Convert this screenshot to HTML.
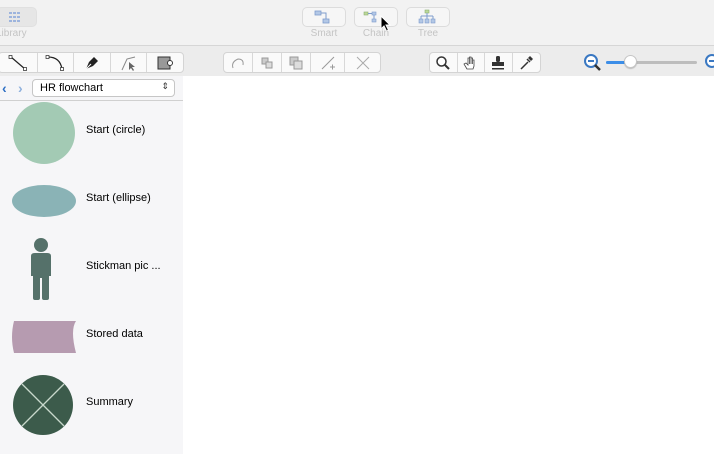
<!DOCTYPE html>
<html><head><style>
body{margin:0;width:714px;height:454px;overflow:hidden;background:#fff;font-family:"Liberation Sans",sans-serif;position:relative}
.a{position:absolute}
.btn{position:absolute;border:1px solid #dcdcdc;border-radius:5px;background:#f6f6f6;box-sizing:border-box}
.lbl{position:absolute;font-size:10px;color:#c4c4c4;text-align:center}
.grp{position:absolute;top:52px;height:21px;border:1px solid #d4d4d4;border-radius:4px;background:#fafafa;box-sizing:border-box;display:flex}
.grp div{border-right:1px solid #d8d8d8;height:100%;box-sizing:border-box;display:flex;align-items:center;justify-content:center}
.grp div:last-child{border-right:none}
.t{position:absolute;font-size:11px;color:#000}
</style></head><body>
<div class="a" style="left:0;top:0;width:714px;height:45px;background:#f2f2f2;border-bottom:1px solid #d6d6d6"></div>
<div class="a" style="left:0;top:46px;width:714px;height:30px;background:#ececec"></div>
<div class="btn" style="left:-4px;top:7px;width:41px;height:20px;background:#e6e6e6;border-color:#e0e0e0"></div>
<svg class="a" style="left:8px;top:10px" width="14" height="14"><g fill="#9db4dd"><rect x="1" y="2" width="3" height="2"/><rect x="5" y="2" width="3" height="2"/><rect x="9" y="2" width="3" height="2"/><rect x="1" y="6" width="3" height="2"/><rect x="5" y="6" width="3" height="2"/><rect x="9" y="6" width="3" height="2"/><rect x="1" y="10" width="3" height="2"/><rect x="5" y="10" width="3" height="2"/><rect x="9" y="10" width="3" height="2"/></g></svg>
<div class="lbl" style="left:-4px;top:28px">Library</div>
<div class="btn" style="left:302px;top:7px;width:44px;height:20px"></div>
<svg class="a" style="left:314px;top:9px" width="20" height="16"><rect x="1" y="2" width="6" height="4" fill="#b3c8e6" stroke="#7d9ccc" stroke-width=".8"/><path d="M7 4h5v6" stroke="#7d9ccc" fill="none"/><rect x="9" y="10" width="6" height="4" fill="#b3c8e6" stroke="#7d9ccc" stroke-width=".8"/></svg>
<div class="lbl" style="left:302px;top:28px;width:44px">Smart</div>
<div class="btn" style="left:354px;top:7px;width:44px;height:20px"></div>
<svg class="a" style="left:363px;top:9px" width="20" height="16"><rect x="1" y="3" width="4" height="3" fill="#bcd89a" stroke="#8cb070" stroke-width=".6"/><path d="M5 4.5h4M11 6v5" stroke="#7d9ccc"/><rect x="9" y="3" width="4" height="3" fill="#b3c8e6" stroke="#7d9ccc" stroke-width=".6"/><rect x="9" y="10" width="4" height="3" fill="#b3c8e6" stroke="#7d9ccc" stroke-width=".6"/></svg>
<svg class="a" style="left:380px;top:15px" width="12" height="18"><path d="M1 1v13l3-3 2.5 5 2-1-2.5-5h4z" fill="#000" stroke="#fff" stroke-width="1"/></svg>
<div class="lbl" style="left:354px;top:28px;width:44px">Chain</div>
<div class="btn" style="left:406px;top:7px;width:44px;height:20px"></div>
<svg class="a" style="left:418px;top:9px" width="20" height="16"><rect x="7" y="1" width="4" height="3" fill="#bcd89a" stroke="#8cb070" stroke-width=".6"/><path d="M9 4v3M3 7h12M3 7v3M9 7v3M15 7v3" stroke="#7d9ccc" fill="none"/><rect x="1" y="10" width="4" height="4" fill="#b3c8e6" stroke="#7d9ccc" stroke-width=".6"/><rect x="7" y="10" width="4" height="4" fill="#b3c8e6" stroke="#7d9ccc" stroke-width=".6"/><rect x="13" y="10" width="4" height="4" fill="#b3c8e6" stroke="#7d9ccc" stroke-width=".6"/></svg>
<div class="lbl" style="left:406px;top:28px;width:44px">Tree</div>

<div class="grp" style="left:-2px;width:186px">
<div style="width:39px"><svg width="20" height="16"><path d="M3 2l14 12" stroke="#222" stroke-width="1.2"/><rect x="1" y="0.5" width="3" height="3" fill="#fff" stroke="#222" stroke-width=".7"/><rect x="15.5" y="12.5" width="3" height="3" fill="#fff" stroke="#222" stroke-width=".7"/></svg></div>
<div style="width:37px"><svg width="20" height="16"><path d="M3 2q12 0 14 12" stroke="#222" stroke-width="1.2" fill="none"/><rect x="1" y="0.5" width="3" height="3" fill="#fff" stroke="#222" stroke-width=".7"/><rect x="15.5" y="12.5" width="3" height="3" fill="#fff" stroke="#222" stroke-width=".7"/></svg></div>
<div style="width:37px"><svg width="16" height="16"><path d="M2 14l3-7 5-5 4 4-5 5z" fill="#222"/><path d="M2 14l5-5" stroke="#fff"/></svg></div>
<div style="width:37px"><svg width="18" height="16"><path d="M2 15l5-11 8-2" stroke="#888" fill="none"/><path d="M9 7v8l2-2 2 3 1-1-2-3h3z" fill="#666"/></svg></div>
<div style="width:36px"><svg width="18" height="16"><rect x="2" y="2" width="12" height="12" fill="#999" stroke="#333"/><circle cx="14" cy="8" r="2.5" fill="#fff" stroke="#333"/></svg></div>
</div>
<div class="grp" style="left:223px;width:158px">
<div style="width:29px"><svg width="16" height="16"><path d="M3 13q-2-6 5-9q6 0 5 6" stroke="#999" fill="none"/></svg></div>
<div style="width:29px"><svg width="16" height="16"><rect x="3" y="3" width="6" height="6" fill="#ccc" stroke="#999"/><rect x="7" y="7" width="6" height="6" fill="#ddd" stroke="#999"/></svg></div>
<div style="width:29px"><svg width="16" height="16"><rect x="2" y="2" width="8" height="8" fill="#ccc" stroke="#999"/><rect x="6" y="6" width="8" height="8" fill="#ddd" stroke="#999"/></svg></div>
<div style="width:34px"><svg width="16" height="16"><path d="M2 14L14 2M10 12h5M12.5 9.5v5" stroke="#999"/></svg></div>
<div style="width:35px"><svg width="16" height="16"><path d="M2 2l12 12M14 2L2 14" stroke="#aaa"/></svg></div>
</div>
<div class="grp" style="left:429px;width:112px">
<div style="width:28px"><svg width="16" height="16"><circle cx="6.5" cy="6.5" r="4.5" stroke="#333" stroke-width="1.5" fill="#fff"/><path d="M10 10l4 4" stroke="#333" stroke-width="2"/></svg></div>
<div style="width:28px"><svg width="16" height="16"><path d="M4 14l-3-5 2-1 2 2V3h1.5v6V2h1.5v7V3h1.5v6V5h1.5v6l-1 3z" stroke="#444" fill="#fff" stroke-width=".8"/></svg></div>
<div style="width:28px"><svg width="16" height="16"><rect x="6" y="1" width="4" height="6" rx="1.5" fill="#333"/><rect x="2" y="7" width="12" height="4" fill="#333"/><rect x="2" y="13" width="12" height="1.5" fill="#333"/></svg></div>
<div style="width:28px"><svg width="16" height="16"><path d="M3 14l7-7M9 4l3 3" stroke="#333" stroke-width="1.5"/><path d="M10 3l2-2 3 3-2 2z" fill="#333"/></svg></div>
</div>
<svg class="a" style="left:583px;top:53px" width="20" height="20"><circle cx="8" cy="8" r="6" fill="#fff" stroke="#3a78c2" stroke-width="2"/><path d="M5 8h6" stroke="#3a78c2" stroke-width="2"/><path d="M12 12l5 5" stroke="#333" stroke-width="2.5"/></svg>
<div class="a" style="left:606px;top:61px;width:91px;height:3px;background:#bdbdbd;border-radius:2px"></div>
<div class="a" style="left:606px;top:61px;width:25px;height:3px;background:#3c8ee8;border-radius:2px"></div>
<div class="a" style="left:624px;top:55px;width:13px;height:13px;border-radius:50%;background:#fff;border:1px solid #c6c6c6;box-shadow:0 1px 1px rgba(0,0,0,.2);box-sizing:border-box"></div>
<svg class="a" style="left:704px;top:53px" width="12" height="16"><circle cx="8" cy="8" r="6" fill="#fff" stroke="#3a78c2" stroke-width="2"/><path d="M5 8h6" stroke="#3a78c2" stroke-width="2"/></svg>

<div class="a" style="left:0;top:76px;width:183px;height:378px;background:#f6f6f8"></div>
<div class="a" style="left:0;top:100px;width:183px;height:1px;background:#d0d0d0"></div>
<div class="a" style="left:2px;top:80px;color:#2d6fc4;font-size:14px;font-weight:bold">&#8249;</div>
<div class="a" style="left:18px;top:80px;color:#8fb1dd;font-size:14px;font-weight:bold">&#8250;</div>
<div class="a" style="left:32px;top:79px;width:143px;height:18px;background:#fff;border:1px solid #c6c6c6;border-radius:4px;box-sizing:border-box;font-size:11px;padding:2px 0 0 7px">HR flowchart<span style="position:absolute;right:5px;top:1px;font-size:9px;color:#333">&#8661;</span></div>

<svg class="a" style="left:0;top:100px" width="183" height="354">
<circle cx="44" cy="33" r="31" fill="#a3cab4"/>
<ellipse cx="44" cy="101" rx="32" ry="16" fill="#8ab3b6"/>
<circle cx="41" cy="145" r="7" fill="#55716a"/>
<path d="M31 156q0-3 4-3h12q4 0 4 3v20h-2v22q0 2-2 2h-3q-2 0-2-2v-20h-2v20q0 2-2 2h-3q-2 0-2-2v-22h-2z" fill="#55716a"/>
<path d="M14 221h62q-6 9 0 32h-62q-4-16 0-32z" fill="#b69bb0"/>
<circle cx="43" cy="305" r="30" fill="#3c5b4b"/>
<path d="M22 284l42 42M64 284l-42 42" stroke="#c8d8cc" stroke-width="1.3"/>
</svg>
<div class="t" style="left:86px;top:124px">Start (circle)</div>
<div class="t" style="left:86px;top:192px">Start (ellipse)</div>
<div class="t" style="left:86px;top:260px">Stickman pic ...</div>
<div class="t" style="left:86px;top:328px">Stored data</div>
<div class="t" style="left:86px;top:396px">Summary</div>
</body></html>
